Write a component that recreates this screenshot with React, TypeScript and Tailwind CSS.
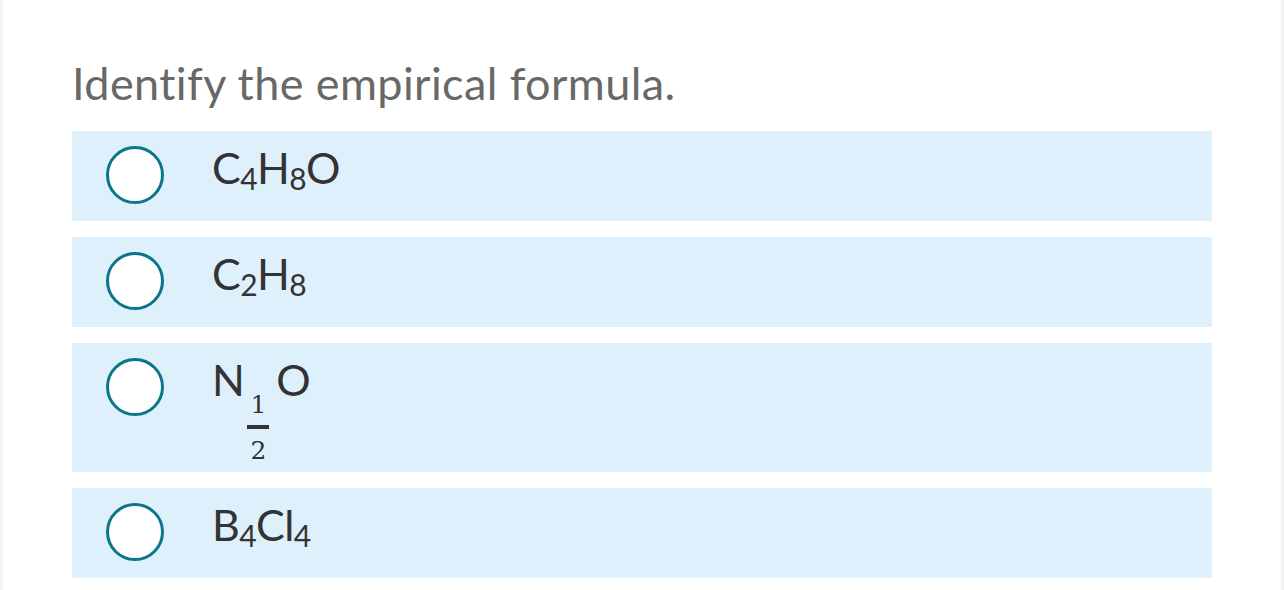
import type { ReactNode } from 'react';

type Choice = { id: string; formula: ReactNode };

const Sub = ({ children }: { children: ReactNode }) => (
  <span className="text-[30px] relative top-[6px]">{children}</span>
);

// N½O — subscript written as a stacked fraction
const HalfSub = () => (
  <span className="inline-flex flex-col items-center ml-[3px] mr-[7px] mt-[34px] font-['DejaVu_Serif','Liberation_Serif',serif] text-[25px] leading-none">
    <span>1</span>
    <span className="mt-[8px] w-[22px] h-[4px] bg-[#333]" />
    <span className="mt-[9px]">2</span>
  </span>
);

const choices: Choice[] = [
  { id: 'a', formula: <>C<Sub>4</Sub>H<Sub>8</Sub>O</> },
  { id: 'b', formula: <>C<Sub>2</Sub>H<Sub>8</Sub></> },
  {
    id: 'c',
    formula: (
      <span className="flex items-start">
        <span>N</span>
        <HalfSub />
        <span>O</span>
      </span>
    ),
  },
  { id: 'd', formula: <>B<Sub>4</Sub>Cl<Sub>4</Sub></> },
];

function ChoiceRow({ formula }: { formula: ReactNode }) {
  return (
    <div className="flex items-start bg-[#dff0fd] min-h-[90px] pl-[34px] pt-[15px] pb-[9px]">
      <span className="shrink-0 w-[58px] h-[58px] rounded-full border-[3px] border-[#0b7589] bg-white" />
      <div className="ml-[48px] text-[43px] text-[#333] leading-none tracking-[-0.6px]">
        <span className="flex items-baseline">{formula}</span>
      </div>
    </div>
  );
}

export default function App() {
  return (
    <div className="w-[1284px] h-[590px] bg-[#f2f2f2] px-[3px] font-['Lato','Noto_Sans',sans-serif]">
      <div className="h-full bg-white px-[69px] pt-[61px]">
        <h1 className="text-[45px] text-[#686868] leading-none tracking-[0.4px]">Identify the empirical formula.</h1>
        <div className="mt-[25px] flex flex-col gap-4">
          {choices.map((c) => (
            <ChoiceRow key={c.id} formula={c.formula} />
          ))}
        </div>
      </div>
    </div>
  );
}
